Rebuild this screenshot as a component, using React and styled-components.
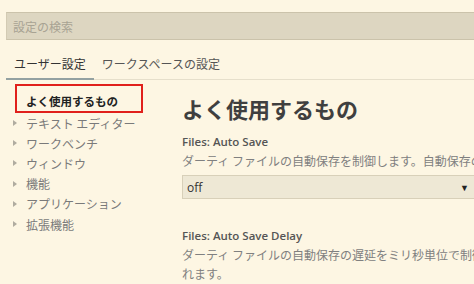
import styled, { createGlobalStyle } from "styled-components";

const GlobalStyle = createGlobalStyle`
  html, body {
    margin: 0;
    padding: 0;
    background: #fdf6e3;
    overflow: hidden;
  }
  body {
    font-family: "Noto Sans CJK JP", "Open Sans", sans-serif;
  }
`;

const navItems = [
  "テキスト エディター",
  "ワークベンチ",
  "ウィンドウ",
  "機能",
  "アプリケーション",
  "拡張機能",
];

const Page = styled.div`
  width: 474px;
  height: 284px;
  padding: 12px 0 0 6px;
  box-sizing: border-box;
  overflow: hidden;
`;

const SearchBox = styled.div`
  height: 28px;
  width: 480px;
  box-sizing: border-box;
  background: #ddd6c1;
  border-top: 1px solid #cbc3ab;
  border-bottom: 1px solid #cbc3ab;
  border-left: 1px solid #d3cbb4;
  display: flex;
  align-items: center;
  padding-left: 6px;
  font-size: 12px;
  color: #a8a393;
`;

const TabBar = styled.div`
  display: flex;
  border-bottom: 1px solid #e6dfcb;
  height: 40px;
  box-sizing: border-box;
`;

const Tab = styled.div`
  display: flex;
  align-items: center;
  padding: 8px 8px 0;
  font-size: 12px;
  color: ${(p) => (p.$active ? "#333" : "#555")};
  border-bottom: 2px solid ${(p) => (p.$active ? "#93a1a1" : "transparent")};
  margin-bottom: -1px;
`;

const Body = styled.div`
  display: flex;
`;

const Nav = styled.div`
  width: 176px;
  flex-shrink: 0;
  padding-top: 4px;
`;

const Selected = styled.div`
  margin-left: 9px;
  width: 128px;
  height: 29px;
  box-sizing: border-box;
  border: 2px solid #e0201c;
  display: flex;
  align-items: center;
  padding: 4px 0 0 9px;
  font-size: 11.5px;
  font-weight: 700;
  color: #222;
`;

const NavRow = styled.div`
  height: 20.2px;
  display: flex;
  align-items: center;
  padding-left: 7px;
  font-size: 12px;
  color: #7a7a7a;
`;

const Arrow = styled.span`
  width: 0;
  height: 0;
  border-top: 3px solid transparent;
  border-bottom: 3px solid transparent;
  border-left: 4px solid #b0aca0;
  margin-right: 9px;
`;

const Content = styled.div`
  width: 300px;
  flex-shrink: 0;
`;

const Heading = styled.h1`
  margin: 13px 0 0;
  font-size: 22px;
  line-height: 30px;
  font-weight: 700;
  color: #3f3f3f;
`;

const SettingTitle = styled.div`
  margin-top: ${(p) => p.$top}px;
  font-family: "Open Sans", "Noto Sans CJK JP", sans-serif;
  font-size: 11.5px;
  font-weight: 600;
  line-height: 18px;
  color: #555;
`;

const Description = styled.div`
  font-size: 12px;
  line-height: 19px;
  color: #808080;
  white-space: nowrap;
`;

const Select = styled.div`
  margin-top: 5px;
  width: 296px;
  height: 24px;
  box-sizing: border-box;
  background: #eee8d5;
  border: 1px solid #d8d0b9;
  display: flex;
  align-items: center;
  justify-content: space-between;
  padding: 0 8px 0 4px;
  font-family: "Open Sans", sans-serif;
  font-size: 12px;
  color: #333;
`;

const Caret = styled.span`
  font-size: 9px;
  color: #222;
`;

export default function App() {
  return (
    <>
      <GlobalStyle />
      <Page>
        <SearchBox>設定の検索</SearchBox>
        <TabBar>
          <Tab $active>ユーザー設定</Tab>
          <Tab>ワークスペースの設定</Tab>
        </TabBar>
        <Body>
          <Nav>
            <Selected>よく使用するもの</Selected>
            {navItems.map((item) => (
              <NavRow key={item}>
                <Arrow />
                {item}
              </NavRow>
            ))}
          </Nav>
          <Content>
            <Heading>よく使用するもの</Heading>
            <SettingTitle $top={10}>Files: Auto Save</SettingTitle>
            <Description>ダーティ ファイルの自動保存を制御します。自動保存の遅延を設定します。</Description>
            <Select>
              off
              <Caret>▼</Caret>
            </Select>
            <SettingTitle $top={28}>Files: Auto Save Delay</SettingTitle>
            <Description>
              ダーティ ファイルの自動保存の遅延をミリ秒単位で制御します。
              <br />
              れます。
            </Description>
          </Content>
        </Body>
      </Page>
    </>
  );
}
